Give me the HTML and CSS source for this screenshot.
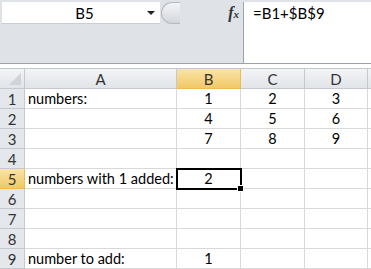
FILE: index.html
```html
<!DOCTYPE html>
<html lang="en">
<head>
    <meta charset="UTF-8">
    <title>Sheet</title>
    <link rel="stylesheet" href="styles.css">
</head>
<body>
    <div class="toolbar">
        <div class="left">
            <div class="namebox">
                <span class="ref">B5</span>
                <span class="arrow"></span>
            </div>
            <div class="knob"></div>
            <span class="fx"><i>f</i><small>x</small></span>
        </div>
        <div class="formula">=B1+$B$9</div>
    </div>
    <div class="sheet">
        <div class="corner"><span class="tri"></span></div>
        <div class="colhead">A</div>
        <div class="colhead active">B</div>
        <div class="colhead">C</div>
        <div class="colhead">D</div>
        <div class="colhead"></div>

        <div class="rowhead">1</div>
        <div class="cell">numbers:</div>
        <div class="cell num">1</div>
        <div class="cell num">2</div>
        <div class="cell num">3</div>
        <div class="cell"></div>

        <div class="rowhead">2</div>
        <div class="cell"></div>
        <div class="cell num">4</div>
        <div class="cell num">5</div>
        <div class="cell num">6</div>
        <div class="cell"></div>

        <div class="rowhead">3</div>
        <div class="cell"></div>
        <div class="cell num">7</div>
        <div class="cell num">8</div>
        <div class="cell num">9</div>
        <div class="cell"></div>

        <div class="rowhead">4</div>
        <div class="cell"></div>
        <div class="cell"></div>
        <div class="cell"></div>
        <div class="cell"></div>
        <div class="cell"></div>

        <div class="rowhead active">5</div>
        <div class="cell">numbers with 1 added:</div>
        <div class="cell num selected">2</div>
        <div class="cell"></div>
        <div class="cell"></div>
        <div class="cell"></div>

        <div class="rowhead">6</div>
        <div class="cell"></div>
        <div class="cell"></div>
        <div class="cell"></div>
        <div class="cell"></div>
        <div class="cell"></div>

        <div class="rowhead">7</div>
        <div class="cell"></div>
        <div class="cell"></div>
        <div class="cell"></div>
        <div class="cell"></div>
        <div class="cell"></div>

        <div class="rowhead">8</div>
        <div class="cell"></div>
        <div class="cell"></div>
        <div class="cell"></div>
        <div class="cell"></div>
        <div class="cell"></div>

        <div class="rowhead">9</div>
        <div class="cell">number to add:</div>
        <div class="cell num">1</div>
        <div class="cell"></div>
        <div class="cell"></div>
        <div class="cell"></div>
    </div>
</body>
</html>
```
FILE: styles.css
```css
body {
    margin: 0;
    width: 371px;
    height: 269px;
    overflow: hidden;
    font-family: Lato, "Open Sans", sans-serif;
    font-size: 14px;
    color: #000;
    background-color: #fff;
}
.toolbar {
    display: flex;
    height: 61px;
    padding-top: 2px;
    padding-left: 2px;
    background-color: #dfe2e7;
    border-bottom: 1px solid #9da3ab;
}
.left {
    display: flex;
    align-items: flex-start;
    width: 241px;
    height: 61px;
    position: relative;
}
.namebox {
    display: flex;
    align-items: center;
    width: 158px;
    height: 21px;
    background-color: #fff;
    border-bottom: 1px solid #c9ced6;
}
.ref {
    flex: 1;
    text-align: center;
    padding-left: 20px;
    font-size: 15px;
}
.arrow {
    width: 0;
    height: 0;
    margin-right: 5px;
    border-left: 4px solid transparent;
    border-right: 4px solid transparent;
    border-top: 4px solid #222;
}
.knob {
    width: 18px;
    height: 20px;
    margin-left: 1px;
    border-radius: 11px 0 0 11px;
    background: linear-gradient(#f4f5f7, #d3d6db);
    border: 1px solid #b5bac2;
    border-right: none;
}
.fx {
    position: absolute;
    right: 4px;
    top: 2px;
    font-family: "Liberation Serif", serif;
    font-size: 16px;
    font-weight: bold;
    color: #333;
}
.fx small {
    font-size: 11px;
    font-style: italic;
}
.formula {
    flex: 1;
    height: 61px;
    padding-left: 9px;
    line-height: 22px;
    font-size: 15px;
    background-color: #fff;
    border-left: 1px solid #9da3ab;
}
.sheet {
    display: grid;
    grid-template-columns: 25px 152px 64px 64px 63px 1fr;
    grid-auto-rows: 20px;
    margin-top: 4px;
    border-top: 1px solid #c4c8cf;
}
.corner,
.colhead,
.rowhead {
    background: linear-gradient(#f3f4f6, #e1e4e8);
    border-right: 1px solid #c5c9cf;
    border-bottom: 1px solid #c5c9cf;
    color: #333;
    text-align: center;
    line-height: 20px;
    font-size: 15px;
}
.rowhead {
    background: #e4e7eb;
}
.corner {
    position: relative;
}
.tri {
    position: absolute;
    right: 3px;
    bottom: 3px;
    width: 0;
    height: 0;
    border-left: 12px solid transparent;
    border-bottom: 12px solid #d0d3d8;
}
.colhead.active,
.rowhead.active {
    background: linear-gradient(#f9e4a9, #f2c866);
    border-right-color: #f2b94c;
    border-bottom-color: #f2b94c;
}
.cell {
    border-right: 1px solid #d9d9d9;
    border-bottom: 1px solid #d9d9d9;
    line-height: 20px;
    padding-left: 3px;
    white-space: nowrap;
    font-size: 14.5px;
}
.num {
    text-align: center;
    padding-left: 0;
}
.selected {
    position: relative;
    outline: 2px solid #000;
    outline-offset: -1px;
}
.selected::after {
    content: "";
    position: absolute;
    right: -4px;
    bottom: -4px;
    width: 5px;
    height: 5px;
    background-color: #000;
    border: 1px solid #fff;
}
```
